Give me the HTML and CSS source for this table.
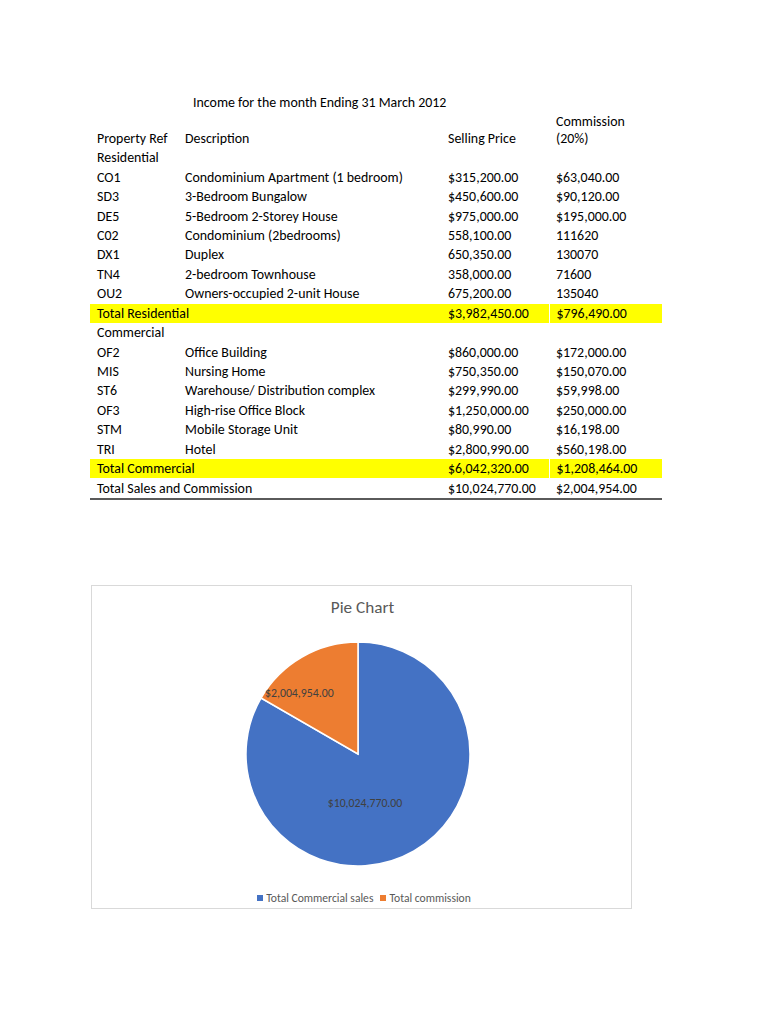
FILE: index.html
```html
<!DOCTYPE html>
<html>
<head>
<meta charset="utf-8">
<link rel="stylesheet" href="styles.css">
</head>
<body>
<div class="page">
  <table class="sheet">
    <colgroup>
      <col class="c1"><col class="c2"><col class="c3"><col class="c4">
    </colgroup>
    <tr class="title-row"><td></td><td colspan="3" class="title">Income for the month Ending 31 March 2012</td></tr>
    <tr class="head-row">
      <td>Property Ref</td><td>Description</td><td>Selling Price</td><td>Commission<br>(20%)</td>
    </tr>
    <tr><td>Residential</td><td></td><td></td><td></td></tr>
    <tr><td>CO1</td><td>Condominium Apartment (1 bedroom)</td><td>$315,200.00</td><td>$63,040.00</td></tr>
    <tr><td>SD3</td><td>3-Bedroom Bungalow</td><td>$450,600.00</td><td>$90,120.00</td></tr>
    <tr><td>DE5</td><td>5-Bedroom 2-Storey House</td><td>$975,000.00</td><td>$195,000.00</td></tr>
    <tr><td>C02</td><td>Condominium (2bedrooms)</td><td>558,100.00</td><td>111620</td></tr>
    <tr><td>DX1</td><td>Duplex</td><td>650,350.00</td><td>130070</td></tr>
    <tr><td>TN4</td><td>2-bedroom Townhouse</td><td>358,000.00</td><td>71600</td></tr>
    <tr><td>OU2</td><td>Owners-occupied 2-unit House</td><td>675,200.00</td><td>135040</td></tr>
    <tr class="total"><td colspan="2">Total Residential</td><td>$3,982,450.00</td><td class="last">$796,490.00</td></tr>
    <tr><td>Commercial</td><td></td><td></td><td></td></tr>
    <tr><td>OF2</td><td>Office Building</td><td>$860,000.00</td><td>$172,000.00</td></tr>
    <tr><td>MIS</td><td>Nursing Home</td><td>$750,350.00</td><td>$150,070.00</td></tr>
    <tr><td>ST6</td><td>Warehouse/ Distribution complex</td><td>$299,990.00</td><td>$59,998.00</td></tr>
    <tr><td>OF3</td><td>High-rise Office Block</td><td>$1,250,000.00</td><td>$250,000.00</td></tr>
    <tr><td>STM</td><td>Mobile Storage Unit</td><td>$80,990.00</td><td>$16,198.00</td></tr>
    <tr><td>TRI</td><td>Hotel</td><td>$2,800,990.00</td><td>$560,198.00</td></tr>
    <tr class="total"><td colspan="2">Total Commercial</td><td>$6,042,320.00</td><td class="last">$1,208,464.00</td></tr>
    <tr class="grand"><td colspan="2">Total Sales and Commission</td><td>$10,024,770.00</td><td>$2,004,954.00</td></tr>
  </table>

  <div class="chart">
    <div class="chart-title">Pie Chart</div>
    <svg class="pie" width="539" height="250" viewBox="0 0 539 250">
      <path d="M266,124 L169.0,68.0 A112,112 0 1,0 266,12 Z" fill="#4472C4" stroke="#fff" stroke-width="1.5"/>
      <path d="M266,124 L266,12 A112,112 0 0,0 169.0,68.0 Z" fill="#ED7D31" stroke="#fff" stroke-width="1.5"/>
      <text x="173" y="67" class="lbl">$2,004,954.00</text>
      <text x="273" y="177" class="lbl" text-anchor="middle">$10,024,770.00</text>
    </svg>
    <div class="legend">
      <span class="item"><span class="sw blue"></span>Total Commercial sales</span>
      <span class="item"><span class="sw orange"></span>Total commission</span>
    </div>
  </div>
</div>
</body>
</html>
```

FILE: styles.css
```css
html, body {
  margin: 0;
  padding: 0;
  background: #ffffff;
}
body {
  font-family: "Carlito", "Calibri", "Lato", sans-serif;
  color: #000;
}
.page {
  padding: 94px 0 0 90px;
}
.sheet {
  border-collapse: collapse;
  table-layout: fixed;
  width: 572px;
  font-size: 13.9px;
}
.c1 { width: 88px; }
.c2 { width: 263px; }
.c3 { width: 108px; }
.c4 { width: 113px; }
.sheet td {
  padding: 0 0 0 7px;
  height: 19.45px;
  line-height: 19px;
  white-space: nowrap;
  vertical-align: middle;
}
.title-row td {
  height: 17px;
  line-height: 17px;
}
.sheet td.title {
  padding-left: 15px;
}
.head-row td {
  height: 36px;
  line-height: 17px;
  vertical-align: bottom;
  padding-bottom: 1px;
}
.total td {
  background: #ffff00;
}
.total td.last {
  border-left: 1px solid #ffffff;
}
.grand td {
  border-bottom: 2px solid #5a5a5a;
}
.chart {
  margin-top: 85px;
  margin-left: 1px;
  width: 539px;
  height: 322px;
  border: 1px solid #d9d9d9;
  display: flex;
  flex-direction: column;
  align-items: center;
}
.chart-title {
  margin-top: 11px;
  font-size: 17.2px;
  line-height: 22px;
  color: #595959;
  padding-left: 2px;
}
.pie {
  display: block;
  margin-top: 11px;
}
.lbl {
  font-family: "Carlito", "Calibri", "Lato", sans-serif;
  font-size: 11.8px;
  fill: #404040;
}
.legend {
  margin-top: 9px;
  font-size: 11.6px;
  line-height: 18px;
  color: #595959;
  display: flex;
  gap: 7px;
  padding-left: 5px;
}
.item {
  display: flex;
  align-items: center;
  gap: 3px;
}
.sw {
  display: inline-block;
  width: 6px;
  height: 6px;
}
.blue { background: #4472C4; }
.orange { background: #ED7D31; }
```
